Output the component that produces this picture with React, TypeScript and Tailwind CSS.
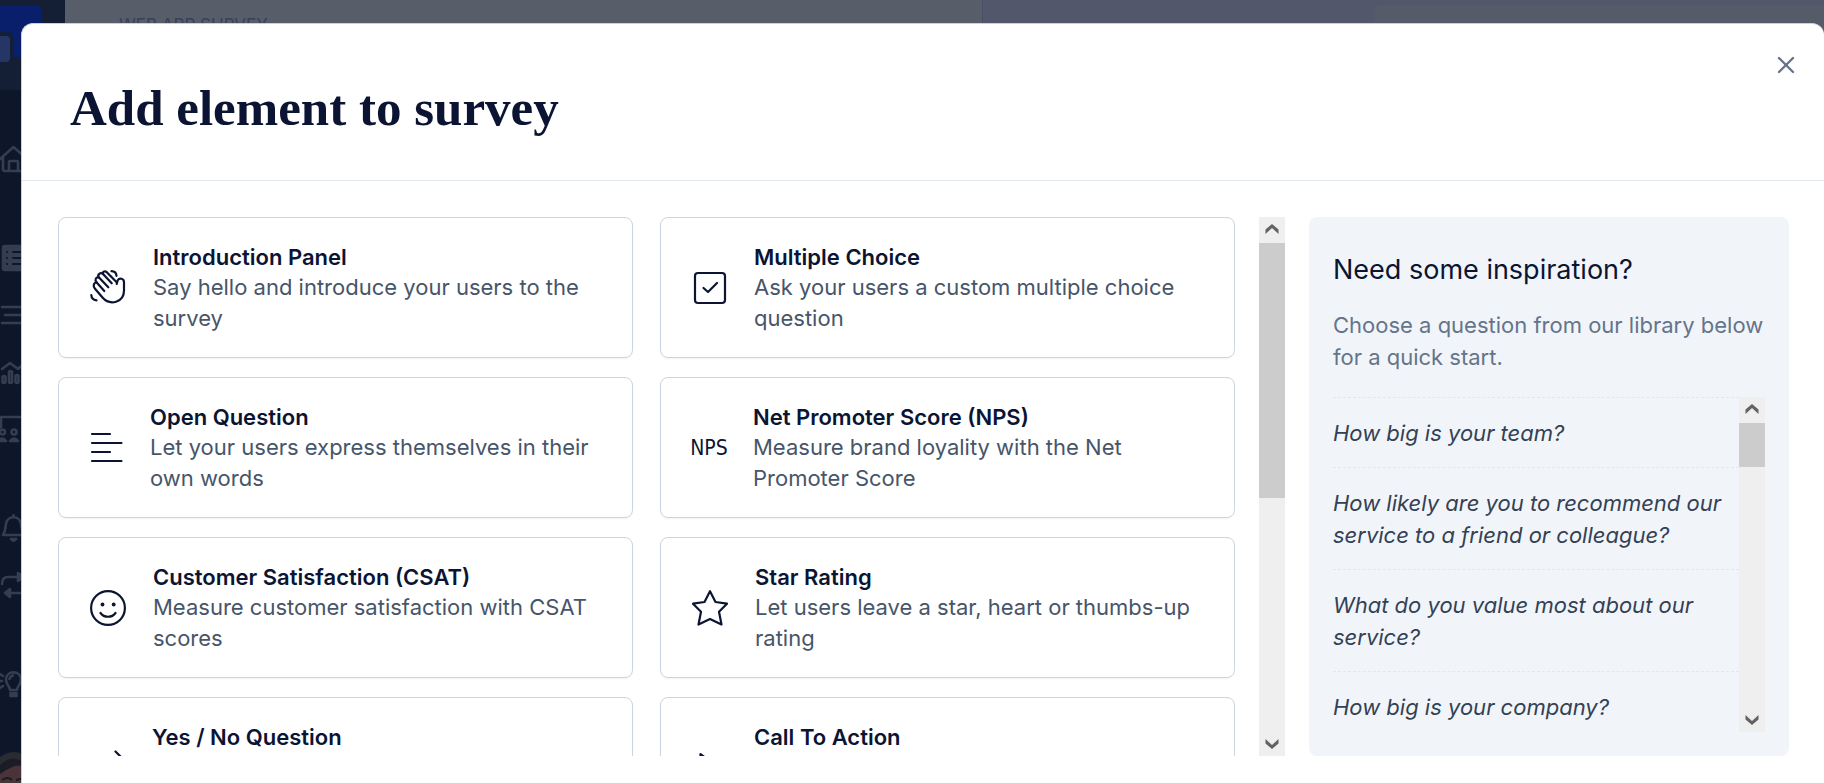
import React from 'react';
import { X } from 'lucide-react';

interface IconProps {
  viewBox?: string;
  className?: string;
  children: React.ReactNode;
}

interface ElementOption {
  title: string;
  description: string;
  icon: React.ReactNode;
}

const OptionIcon: React.FC<IconProps> = ({ viewBox = '0 0 36 36', className = 'w-9', children }) => (
  <svg
    viewBox={viewBox}
    className={`h-9 shrink-0 ${className}`}
    fill="none"
    stroke="currentColor"
    strokeWidth="2.2"
    strokeLinecap="round"
    strokeLinejoin="round"
    aria-hidden="true"
  >
    {children}
  </svg>
);

const NavIcon: React.FC<IconProps> = ({ children }) => (
  <svg
    viewBox="0 0 28 28"
    className="w-7 h-7 shrink-0"
    fill="none"
    stroke="currentColor"
    strokeWidth="2.6"
    strokeLinecap="round"
    strokeLinejoin="round"
    aria-hidden="true"
  >
    {children}
  </svg>
);

const options: ElementOption[] = [
  {
    title: 'Introduction Panel',
    description: 'Say hello and introduce your users to the survey',
    icon: (
      <OptionIcon viewBox="1 2 36 36">
        <path d="M27.700 14.300 L17.800 4.200 C15.500 2.300 12.800 4 14.300 6.300 L22.700 15.300" />
        <path d="M14.300 6.300 C11.500 3.800 7.800 6.500 10 9.500 L19.300 19.300" />
        <path d="M10 9.500 C7 8.500 5.200 11.800 7.700 14.500 L15.300 23" />
        <path d="M7.700 14.500 C4.500 14.500 3.700 18.300 6 20.700 L13.500 29.500 C21 38 35 34.500 35 22.500 V14.300 C35 10.500 30.500 9.300 28.600 12.500 L27.700 16" />
        <path d="M22.500 3.200 C25.500 3.400 27.300 5 27.500 7.800" />
        <path d="M2.300 27 C2.500 30 4.500 32 7.500 32.300" />
      </OptionIcon>
    ),
  },
  {
    title: 'Multiple Choice',
    description: 'Ask your users a custom multiple choice question',
    icon: (
      <OptionIcon viewBox="0 0 35 36" className="w-[35px]">
        <rect x="3" y="3" width="30" height="30" rx="3" />
        <path d="M11.500 18 L16 22 L25 13" />
      </OptionIcon>
    ),
  },
  {
    title: 'Open Question',
    description: 'Let your users express themselves in their own words',
    icon: (
      <OptionIcon viewBox="0 0 33 36" className="w-[33px]">
        <path d="M2 4H20M2 13H31.500M2 22H20M2 31H31.500" />
      </OptionIcon>
    ),
  },
  {
    title: 'Net Promoter Score (NPS)',
    description: 'Measure brand loyality with the Net Promoter Score',
    icon: (
      <span className="flex justify-center w-[34px] shrink-0 font-['DejaVu_Sans_Condensed','DejaVu_Sans',sans-serif] text-[21px] leading-9">
        NPS
      </span>
    ),
  },
  {
    title: 'Customer Satisfaction (CSAT)',
    description: 'Measure customer satisfaction with CSAT scores',
    icon: (
      <OptionIcon>
        <circle cx="18" cy="18" r="16.900" />
        <path d="M10.500 23 C14 28 22 28 25.500 23" />
        <circle cx="12.500" cy="14.500" r="1.900" fill="currentColor" stroke="none" />
        <circle cx="23.700" cy="14.500" r="1.900" fill="currentColor" stroke="none" />
      </OptionIcon>
    ),
  },
  {
    title: 'Star Rating',
    description: 'Let users leave a star, heart or thumbs-up rating',
    icon: (
      <OptionIcon>
        <path d="M18 1.200 L23.500 12 L35 13.700 L27 21.700 L29.500 34.500 L18 29 L6.500 34.500 L9 21.700 L1 13.700 L12.500 12 Z" />
      </OptionIcon>
    ),
  },
  {
    title: 'Yes / No Question',
    description: 'Let your users answer a question with a simple yes or no',
    icon: (
      <OptionIcon viewBox="0 0 35 36" className="w-[35px]">
        <path d="M25.500 1.500 L33 9 L25.500 16 M33 9 H2 M10 20 L2 27 L10 34 M2 27 H33" />
      </OptionIcon>
    ),
  },
  {
    title: 'Call To Action',
    description: 'Send your users to a specific page with a custom button',
    icon: (
      <OptionIcon viewBox="0 0 35 36" className="w-[35px]">
        <path d="M8.500 4 L29 20 L19 21.500 L13.500 30 L8.500 30 Z" />
      </OptionIcon>
    ),
  },
];

const questions = [
  'How big is your team?',
  'How likely are you to recommend our service to a friend or colleague?',
  'What do you value most about our service?',
  'How big is your company?',
];

const ScrollArrow = ({ down = false }: { down?: boolean }) => (
  <svg viewBox="0 0 26 26" className="w-[26px] h-[26px] shrink-0" fill="#636363" aria-hidden="true">
    <path
      d={
        down
          ? 'M6.500 13.500 L13 19 L19.500 13.500 V9 L13 15 L6.500 9 Z'
          : 'M6.500 12.500 L13 7 L19.500 12.500 V17 L13 11 L6.500 17 Z'
      }
    />
  </svg>
);

const ScrollBar = ({ thumb }: { thumb: string }) => (
  <div className="flex flex-col justify-between w-[26px] shrink-0 bg-[#efefef]">
    <div>
      <ScrollArrow />
      <div className={`bg-[#cccccc] ${thumb}`} />
    </div>
    <ScrollArrow down />
  </div>
);

const Sidebar = () => (
  <nav className="w-[65px] shrink-0 overflow-hidden bg-[#0e162a] text-[#353e50]">
    <div className="relative h-[90px] pt-[5px] bg-[#141e35]">
      <div className="w-[41px] h-[52px] rounded-r bg-[#0a1f6b]" />
      <div className="absolute left-0 top-8 w-[14px] h-[34px] rounded-r-lg border-y-4 border-r-4 border-[#141e35] bg-[#243566]" />
    </div>
    <div className="flex flex-col gap-[71px] pt-[55px]">
      <NavIcon>
        <path d="M0 14 L13.500 2 L27 14 M3 12 V24 Q3 26 5 26 H22 Q24 26 24 24 V12 M9 26 V17 Q9 16 10 16 H17 Q18 16 18 17 V26" />
      </NavIcon>
      <div className="flex flex-col gap-[29px]">
        <NavIcon>
          <rect x="3" y="2" width="24" height="24" rx="2" fill="currentColor" />
          <path d="M7 8H7.100M7 14H7.100M7 20H7.100M13 8H24M13 14H24M13 20H24" stroke="#0e162a" strokeWidth="2" />
        </NavIcon>
        <NavIcon>
          <path d="M2 6H26M5 14H26M2 22H26" />
        </NavIcon>
        <NavIcon>
          <path d="M2 11 L10 5 L18 11 L26 4" />
          <rect x="2.500" y="18" width="3" height="7" rx="1.500" />
          <rect x="9" y="13" width="3" height="12" rx="1.500" />
          <rect x="15.500" y="17" width="3" height="8" rx="1.500" />
        </NavIcon>
        <NavIcon>
          <path d="M1 12 V2 H26" />
          <circle cx="2.500" cy="17" r="2.500" />
          <circle cx="14" cy="17" r="2.500" />
          <path d="M-2 26 Q2.500 21 6 26 Z M10 26 Q14 21 18 26 Z" fill="currentColor" />
        </NavIcon>
      </div>
      <div className="flex flex-col gap-[29px]">
        <NavIcon>
          <path d="M3 21 C6 17 5 14 6 10 C7 1 20 1 21 10 C22 14 21 17 24 21 Z M13.500 3 V1" />
          <path d="M11 25 H16 L13.500 27 Z" fill="currentColor" />
        </NavIcon>
        <NavIcon>
          <path d="M2 13 Q2 6 8 6 H22 M7 22 H26" />
          <path d="M18 2 L24 6 L18 10 Z M10 18 L5 22 L10 26 Z" fill="currentColor" />
        </NavIcon>
      </div>
      <NavIcon>
        <path d="M10 20 C10 16 6 15 6 9.500 C6 0 21 0 21 9.500 C21 15 17 16 17 20 Z M9.500 9 Q10 6 13 5.500 M0 4 L3 6 M0 11 H2 M0 18 L3 16" />
        <path d="M10.500 23 H16.500 V26 H10.500 Z" fill="currentColor" />
      </NavIcon>
    </div>
    <svg viewBox="0 0 44 44" className="w-11 h-11 mt-[54px] -ml-2" aria-hidden="true">
      <circle cx="22" cy="22" r="22" fill="#2a2a33" />
      <path d="M8 18 Q20 8 34 18 V44 H8 Z" fill="#4a3438" />
      <path d="M6 16 Q18 0 34 12 Q22 12 8 22 Z" fill="#1b1c26" />
      <path d="M10 28 Q16 24 20 28 M24 28 L32 26" stroke="#1b1c26" strokeWidth="2" fill="none" />
    </svg>
  </nav>
);

// Dimmed page that stays visible around the dialog
const Backdrop = () => (
  <div className="flex h-full" aria-hidden="true">
    <Sidebar />
    <div className="flex-1 pt-[13px] pl-[54px] bg-[#575d69]">
      <p className="text-[17px] leading-6 text-[#36425a]">WEB APP SURVEY</p>
    </div>
    <div className="w-[842px] pt-[5px] pl-[392px] border-l border-[#4b5067] bg-[#52576b]">
      <div className="h-10 rounded-tl bg-[#555b68]" />
    </div>
  </div>
);

export default function App() {
  return (
    <div className="relative h-screen overflow-hidden font-[Inter,sans-serif] text-[#0b1533]">
      <Backdrop />

      <div className="absolute inset-0 pt-[23px] pl-[21px]">
        <div
          role="dialog"
          aria-labelledby="dialog-title"
          className="flex flex-col h-full rounded-t-xl border-t border-l border-[#cbd0da] bg-white"
        >
          <header className="relative pt-[54px] pb-[42px] pl-12 border-b border-[#e2e8f0]">
            <h1 id="dialog-title" className="font-['Liberation_Serif',serif] font-bold text-[51px] leading-[60px]">
              Add element to survey
            </h1>
            <button aria-label="Close" className="absolute top-[27px] right-6 text-[#64748b]">
              <X size={28} strokeWidth={2} />
            </button>
          </header>

          <div className="flex flex-1 min-h-0 gap-6 pt-9 pb-[27px] pl-9 pr-[35px]">
            <div className="flex-1 overflow-hidden">
              <div className="grid grid-cols-2 gap-x-[27px] gap-y-[19px]">
                {options.map((option) => (
                  <button
                    key={option.title}
                    className="flex items-center gap-[27px] pt-6 pb-[23px] pl-[31px] pr-8 border border-[#cbd5e1] rounded-lg text-left text-[22px] shadow-xs"
                  >
                    {option.icon}
                    <span>
                      <span className="block font-semibold leading-[30px]">{option.title}</span>
                      <span className="block leading-[31px] text-[#475569]">{option.description}</span>
                    </span>
                  </button>
                ))}
              </div>
            </div>

            <ScrollBar thumb="h-[255px]" />

            <aside className="flex flex-col w-[480px] shrink-0 pt-[35px] px-6 pb-6 rounded-lg bg-[#f1f5f9]">
              <h2 className="text-[27px] leading-9">Need some inspiration?</h2>
              <p className="mt-[21px] text-[22px] leading-8 text-[#64748b]">
                Choose a question from our library below for a quick start.
              </p>
              <div className="flex flex-1 min-h-0 mt-6">
                <ul className="flex-1 overflow-hidden">
                  {questions.map((question) => (
                    <li key={question} className="border-t border-dashed border-[#e2e8f0]">
                      <button className="w-full pt-[19px] pb-[18px] text-left text-[22px] leading-8 [font-style:oblique_10deg] text-[#334155]">
                        {question}
                      </button>
                    </li>
                  ))}
                </ul>
                <ScrollBar thumb="h-11" />
              </div>
            </aside>
          </div>
        </div>
      </div>
    </div>
  );
}
